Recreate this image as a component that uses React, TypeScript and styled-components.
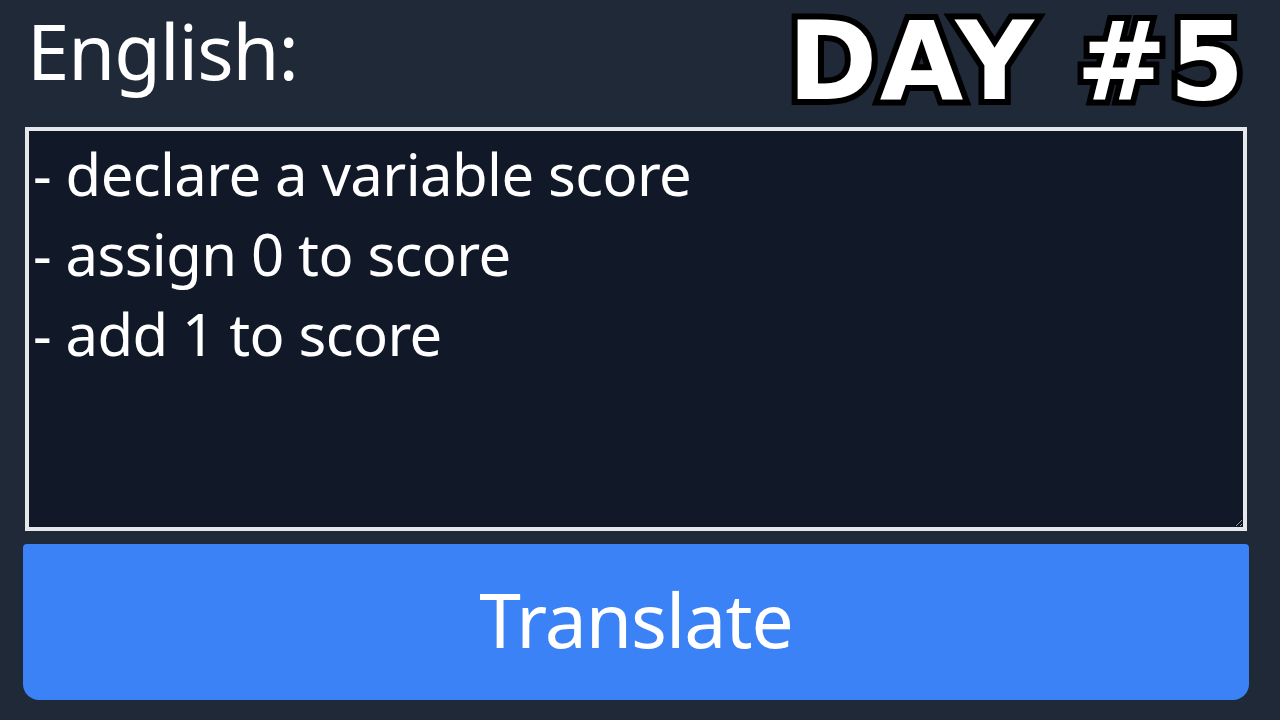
import React from 'react'
import styled, { createGlobalStyle } from 'styled-components'

const GlobalStyle = createGlobalStyle`
  html, body {
    margin: 0;
    padding: 0;
    background: #1f2937;
  }
  * {
    box-sizing: border-box;
  }
`

const Page = styled.div`
  width: 1280px;
  height: 720px;
  padding: 0 31px 20px 23px;
  display: flex;
  flex-direction: column;
  font-family: 'Noto Sans', 'Open Sans', sans-serif;
  color: #ffffff;
`

const Header = styled.div`
  display: flex;
  justify-content: space-between;
  align-items: flex-start;
  padding-bottom: 3px;
`

const Label = styled.label`
  margin-left: 4px;
  font-size: 76px;
  line-height: 1.35;
  letter-spacing: -1px;
`

const DayBadge = styled.div`
  padding: 0 2px 0 6px;
  font-family: 'DejaVu Sans', Verdana, sans-serif;
  font-weight: 700;
  font-size: 108px;
  line-height: 1.15;
  letter-spacing: 2.5px;
  white-space: nowrap;
  color: #ffffff;
  -webkit-text-stroke: 12px #000000;
  paint-order: stroke fill;
`

const Editor = styled.textarea`
  display: block;
  margin: 0 2px;
  height: 404px;
  padding: 3px 4px;
  background: #111827;
  color: #ffffff;
  border: 4px solid #e5e7eb;
  border-radius: 0;
  outline: none;
  font-family: 'Noto Sans', 'Open Sans', sans-serif;
  font-size: 58px;
  line-height: 80px;
  letter-spacing: -0.6px;
  resize: vertical;
`

const TranslateButton = styled.button`
  margin-top: 13px;
  height: 156px;
  padding: 0 0 6px;
  border: none;
  border-radius: 4px 4px 16px 16px;
  background: #3b82f6;
  color: #ffffff;
  font-family: 'Noto Sans', 'Open Sans', sans-serif;
  font-size: 75px;
  letter-spacing: -1px;
  cursor: pointer;
`

const initialText = `- declare a variable score
- assign 0 to score
- add 1 to score`

export default function App() {
  return (
    <>
      <GlobalStyle />
      <Page>
        <Header>
          <Label htmlFor="english">English:</Label>
          <DayBadge>DAY #5</DayBadge>
        </Header>
        <Editor id="english" defaultValue={initialText} spellCheck={false} />
        <TranslateButton>Translate</TranslateButton>
      </Page>
    </>
  )
}
